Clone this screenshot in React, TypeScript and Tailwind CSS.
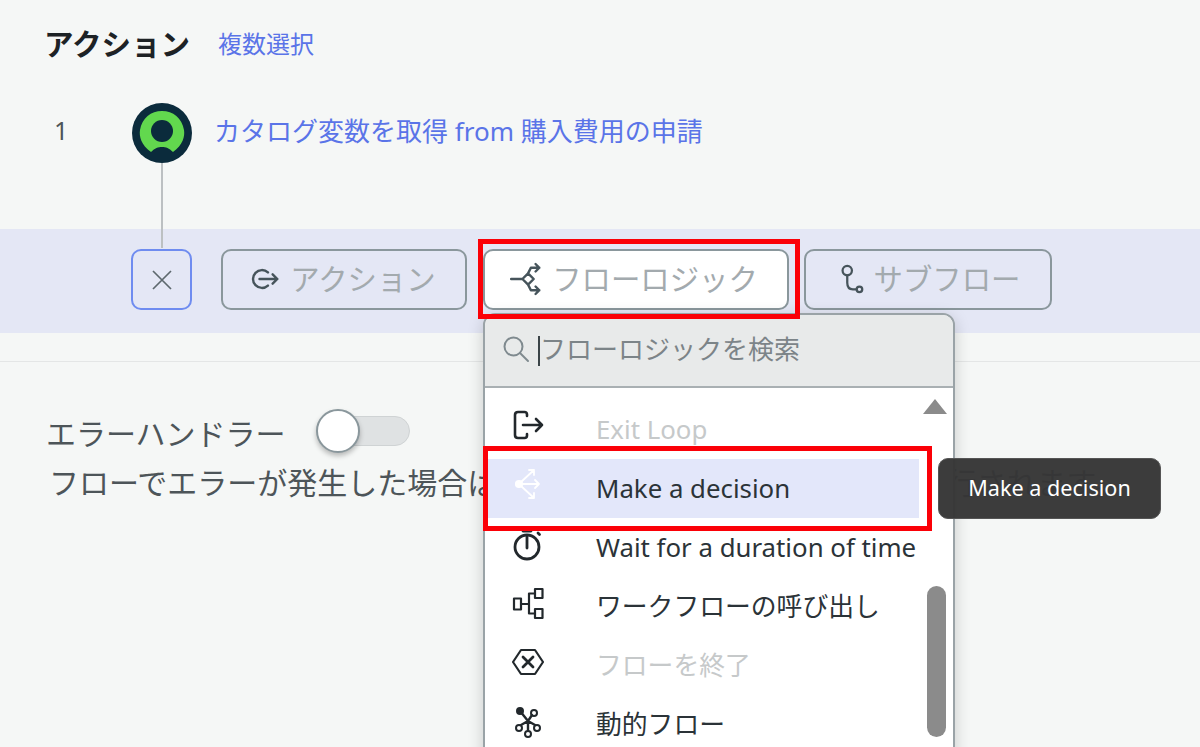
import React from "react";

function Ic({ children, className = "", sw = "2.2" }: { children: React.ReactNode; className?: string; sw?: string }) {
  return (
    <svg viewBox="0 0 32 32" fill="none" stroke="currentColor" strokeWidth={sw} strokeLinecap="round" strokeLinejoin="round" className={`overflow-visible ${className}`}>
      {children}
    </svg>
  );
}

function Row({ icon, label, muted, active }: { icon: React.ReactNode; label: string; muted?: boolean; active?: boolean }) {
  return (
    <div className={`flex items-center h-[59px] pl-[27px] ${active ? "bg-[#e3e7fa]" : ""}`}>
      <span className={`w-[32px] h-[32px] shrink-0 -mt-[9px] ${active ? "text-white" : "text-[#22282c]"}`}>{icon}</span>
      <span className={`ml-[52px] text-[25.8px] whitespace-nowrap ${muted ? "text-[#c6c9ca]" : "text-[#2b3338]"}`}>{label}</span>
    </div>
  );
}

function ActionBtn({ icon, label, w, white }: { icon: React.ReactNode; label: string; w: string; white?: boolean }) {
  return (
    <div className={`${w} h-[61px] flex items-center justify-center gap-[8px] rounded-[10px] border-2 border-[#8a979c] ${white ? "bg-white" : ""}`}>
      <span className="w-[30px] h-[30px] -mt-[2px] text-[#46545b]">{icon}</span>
      <span className="text-[29.4px] text-[#a3aaae]">{label}</span>
    </div>
  );
}

export default function App() {
  return (
    <div className="relative w-[1200px] h-[747px] overflow-hidden bg-[#f5f7f6] text-[#2b3338] font-['Noto_Sans','Noto_Sans_CJK_JP',sans-serif]">
      <div className="flex items-center h-[88px] pl-[44px]">
        <span className="text-[29.5px] font-bold text-[#1d2225]">アクション</span>
        <span className="ml-[28px] text-[24px] text-[#5a74e8]">複数選択</span>
      </div>

      <div className="flex h-[141px]">
        <div className="w-[131px] pl-[54px] pt-[24px] text-[25px] text-[#4d5559]">1</div>
        <div className="flex flex-col items-center w-[62px] pt-[15px]">
          <svg viewBox="0 0 60 60" className="w-[60px] h-[60px] shrink-0">
            <circle cx="30" cy="30" r="30" fill="#0b2b3c" />
            <path d="M19 49 C9 42 7 33 8 27 C10 15 19 8 30 8 C41 8 50 15 52 27 C53 33 51 42 41 49 C37 45 34 44 30 44 C26 44 23 45 19 49 Z" fill="#62d84e" />
            <circle cx="30" cy="28" r="11" fill="#0b2b3c" />
          </svg>
          <div className="w-[2px] grow bg-[#bcc0c2] -mb-[19px]" />
        </div>
        <div className="ml-[21px] pt-[24px] text-[26px] text-[#5a74e8] whitespace-nowrap">カタログ変数を取得 from 購入費用の申請</div>
      </div>

      <div className="flex items-center h-[104px] pl-[131px] pb-[3px] bg-[#e4e7f5]">
        <div className="w-[61px] h-[61px] flex items-center justify-center rounded-[10px] border-2 border-[#6f8cf0]">
          <svg viewBox="0 0 24 24" className="w-[24px] h-[24px] text-[#5d686e]" fill="none" stroke="currentColor" strokeWidth="1.7">
            <path d="M3 3 L21 21 M21 3 L3 21" />
          </svg>
        </div>
        <div className="ml-[29px]"><ActionBtn w="w-[246px]" label="アクション" icon={
          <Ic sw="2.6"><path d="M17 9 A9.5 9.5 0 1 0 17 23" /><path d="M8 16 H27 M22 11 L27 16 L22 21" /></Ic>
        } /></div>
        <div className="ml-[16px]"><ActionBtn white w="w-[306px]" label="フローロジック" icon={
          <Ic sw="2.6"><path d="M-3 16 H9 M9 16 L15 10 L21 16 L15 22 Z M15 10 L18 4 H27 M23 0 L27 4 L23 8 M15 22 L18 28 H27 M23 24 L27 28 L23 32" /></Ic>
        } /></div>
        <div className="ml-[15px]"><ActionBtn w="w-[248px]" label="サブフロー" icon={
          <Ic sw="2.4"><circle cx="12" cy="7" r="5" /><path d="M12 12 V20 C12 25 14 27 18 27 H22" /><circle cx="25" cy="27" r="3" /></Ic>
        } /></div>
      </div>

      <div className="h-[28px] border-b-[1px] border-[#e4e6e6] box-content" />

      <div className="pt-[45px] pl-[46px]">
        <div className="flex items-center h-[50px]">
          <span className="text-[30px] text-[#4d5559] mt-[3px]">エラーハンドラー</span>
          <div className="relative ml-[33px] -mt-[2px] w-[92px] h-[30px] rounded-full bg-[#dfe2e3] border border-[#cfd3d4]">
            <div className="absolute left-[-3px] top-[-8px] w-[44px] h-[44px] rounded-full bg-white border-2 border-[#8a979c] shadow-[0_3px_5px_rgba(0,0,0,0.25)]" />
          </div>
        </div>
        <div className="pl-[3px] pt-[3px] text-[30px] text-[#4d5559] whitespace-nowrap">フローでエラーが発生した場合は、まずこのエラーハンドラーが実行されます。</div>
      </div>

      {/* dropdown */}
      <div className="absolute left-[483px] top-[313px] w-[472px] h-[460px] rounded-t-[12px] border-2 border-[#9aa3a7] bg-white overflow-hidden shadow-[0_4px_16px_rgba(0,0,0,0.18)]">
        <div className="flex items-center h-[73px] bg-[#e8eaea] border-b-2 border-[#a9b0b3] pl-[17px]">
          <svg viewBox="0 0 28 28" className="w-[28px] h-[28px] -mt-[4px] text-[#7f8a8f]" fill="none" stroke="currentColor" strokeWidth="2">
            <circle cx="11.5" cy="11.5" r="9" /><path d="M18 18 L26 26" strokeLinecap="round" />
          </svg>
          <span className="ml-[8px] w-[2px] h-[30px] bg-[#3b4448]" />
          <span className="text-[26px] text-[#7c8488] -mt-[2px]">フローロジックを検索</span>
        </div>
        <div className="relative w-[434px] pt-[12px]">
          <Row muted label="Exit Loop" icon={<Ic sw="2.6"><path d="M15 7 V5.5 Q15 3 12.5 3 H6 Q3 3 3 6 V26 Q3 29 6 29 H12.5 Q15 29 15 26.5 V25 M11 16 H30 M24 10 L30 16 L24 22" /></Ic>} />
          <Row active label="Make a decision" icon={
            <Ic sw="1.8"><circle cx="7" cy="16" r="3.2" fill="currentColor" /><path d="M9 14 L22 2 M17 2 H22 V7 M10 16 H27 M23 12 L27 16 L23 20 M9 18 L22 30 M17 30 H22 V25" /></Ic>
          } />
          <Row label="Wait for a duration of time" icon={
            <Ic sw="2.8"><g transform="translate(0 2)"><circle cx="15" cy="18" r="12" /><path d="M15 8 V19" /><path d="M11 2 H19 M26 4 L27.5 5.5" /></g></Ic>
          } />
          <Row label="ワークフローの呼び出し" icon={
            <Ic><g transform="translate(0 2)"><rect x="2" y="10.5" width="7" height="11" /><rect x="23" y="1" width="7.5" height="9" /><rect x="23" y="21" width="7.5" height="9" /><path d="M9 16 H17 M23 5.5 H17 V25.5 H23" /></g></Ic>
          } />
          <Row muted label="フローを終了" icon={
            <Ic><g transform="translate(0 1)"><path d="M9 4 H23 L31 16 L23 28 H9 L1 16 Z" /><path d="M11 11 L21 21 M21 11 L11 21" strokeWidth="2.8" /></g></Ic>
          } />
          <Row label="動的フロー" icon={
            <Ic sw="2"><g transform="translate(0 3)"><path d="M8 4 L16 14 L20 8 M16 14 L9 18 M16 14 V23 M16 14 L23 18" strokeWidth="2.4" /><circle cx="8" cy="4" r="3" fill="currentColor" /><circle cx="22" cy="6" r="3" /><circle cx="7" cy="21" r="3" /><circle cx="16" cy="27" r="3" /><circle cx="25" cy="21" r="3" /></g></Ic>
          } />
        </div>
        {/* scrollbar */}
        <div className="absolute right-[6px] top-[84px] w-0 h-0 border-l-[12px] border-r-[12px] border-b-[15px] border-l-transparent border-r-transparent border-b-[#8b8b8b]" />
        <div className="absolute right-[7px] top-[271px] w-[19px] h-[151px] rounded-full bg-[#8b8b8b]" />
      </div>

      {/* tooltip */}
      <div className="absolute left-[938px] top-[458px] w-[223px] h-[61px] flex items-center justify-center rounded-[10px] border border-[#555] bg-[#363636]/[0.97] text-white text-[21.6px]">
        Make a decision
      </div>

      {/* red highlight boxes */}
      <div className="absolute left-[478px] top-[239px] w-[322px] h-[80px] border-[5px] border-[#fb0007]" />
      <div className="absolute left-[483px] top-[446px] w-[449px] h-[85px] border-[5px] border-[#fb0007]" />
    </div>
  );
}
